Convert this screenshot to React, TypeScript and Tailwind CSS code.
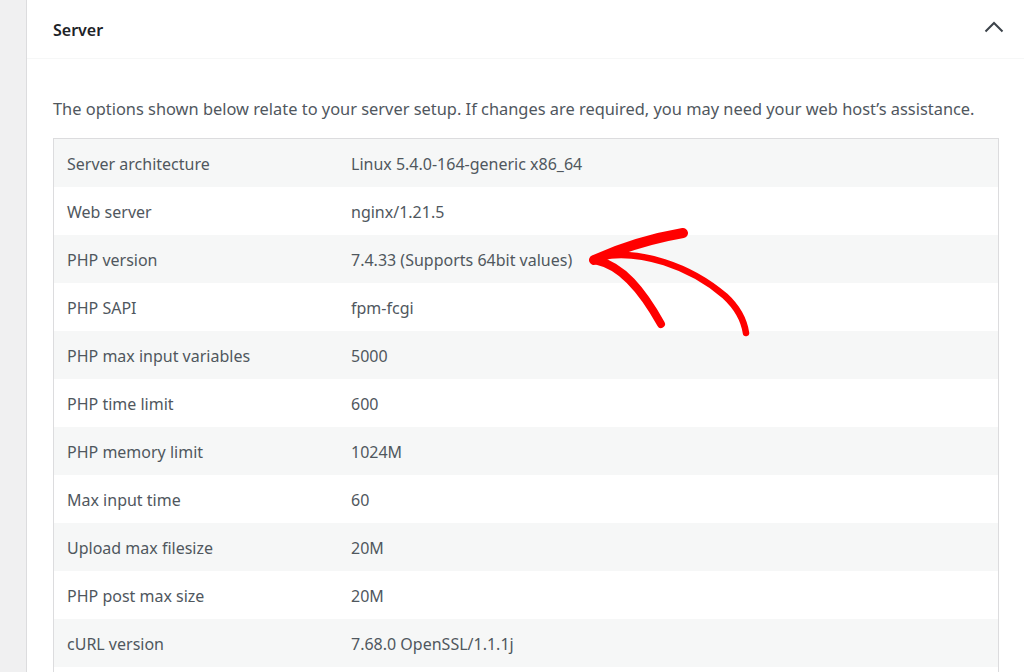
const rows: [string, string][] = [
    ["Server architecture", "Linux 5.4.0-164-generic x86_64"],
    ["Web server", "nginx/1.21.5"],
    ["PHP version", "7.4.33 (Supports 64bit values)"],
    ["PHP SAPI", "fpm-fcgi"],
    ["PHP max input variables", "5000"],
    ["PHP time limit", "600"],
    ["PHP memory limit", "1024M"],
    ["Max input time", "60"],
    ["Upload max filesize", "20M"],
    ["PHP post max size", "20M"],
    ["cURL version", "7.68.0 OpenSSL/1.1.1j"],
];

function HandArrow() {
    return (
        <svg className="absolute left-0 top-0 pointer-events-none" width="1024" height="672" viewBox="0 0 1024 672">
            <g fill="none" stroke="#ff0000" strokeLinecap="round" strokeLinejoin="round">
                <path d="M594 260 C612 252 642 240 683 233" strokeWidth="10" />
                <path d="M598 261 C622 266 642 290 661 324" strokeWidth="8" />
                <path d="M600 257 C640 249 690 266 725 296 C738 308 744 320 746 333" strokeWidth="6.5" />
            </g>
        </svg>
    );
}

export default function App() {
    return (
        <div className="relative flex h-[672px] w-[1024px] overflow-hidden bg-[#f0f0f1] font-['Noto_Sans','Open_Sans',sans-serif]">
            <div className="w-[26px] shrink-0" />
            <div className="flex-1 bg-white border-l border-[#dcdcde]">
                <div className="flex h-[59px] items-center justify-between border-b border-[#f6f7f7] pl-[26px] pr-[20px]">
                    <h2 className="pt-[2px] text-[16px] font-semibold text-[#1d2327]">Server</h2>
                    <svg width="20" height="12" viewBox="0 0 20 12" className="-mt-[4px]">
                        <polyline points="1.5,10.5 10,2 18.5,10.5" fill="none" stroke="#3c434a" strokeWidth="2" />
                    </svg>
                </div>
                <div className="pl-[26px] pr-[25px] pt-[36px]">
                    <p className="pt-[1px] text-[16.4px] leading-[26px] text-[#50575e] whitespace-nowrap">
                        The options shown below relate to your server setup. If changes are required, you may need your web host’s assistance.
                    </p>
                    <div className="mt-[16px] border border-[#dcdcde]">
                        {rows.map(([label, value], i) => (
                            <div
                                key={label}
                                className={`grid h-[48px] grid-cols-[297px_1fr] items-center pt-[2px] text-[16px] text-[#50575e] ${i % 2 === 0 ? "bg-[#f6f7f7]" : "bg-white"}`}
                            >
                                <div className="pl-[13px]">{label}</div>
                                <div>{value}</div>
                            </div>
                        ))}
                        {/* next row starts just past the bottom edge */}
                        <div className="h-[48px] bg-white" />
                    </div>
                </div>
            </div>
            <HandArrow />
        </div>
    );
}
